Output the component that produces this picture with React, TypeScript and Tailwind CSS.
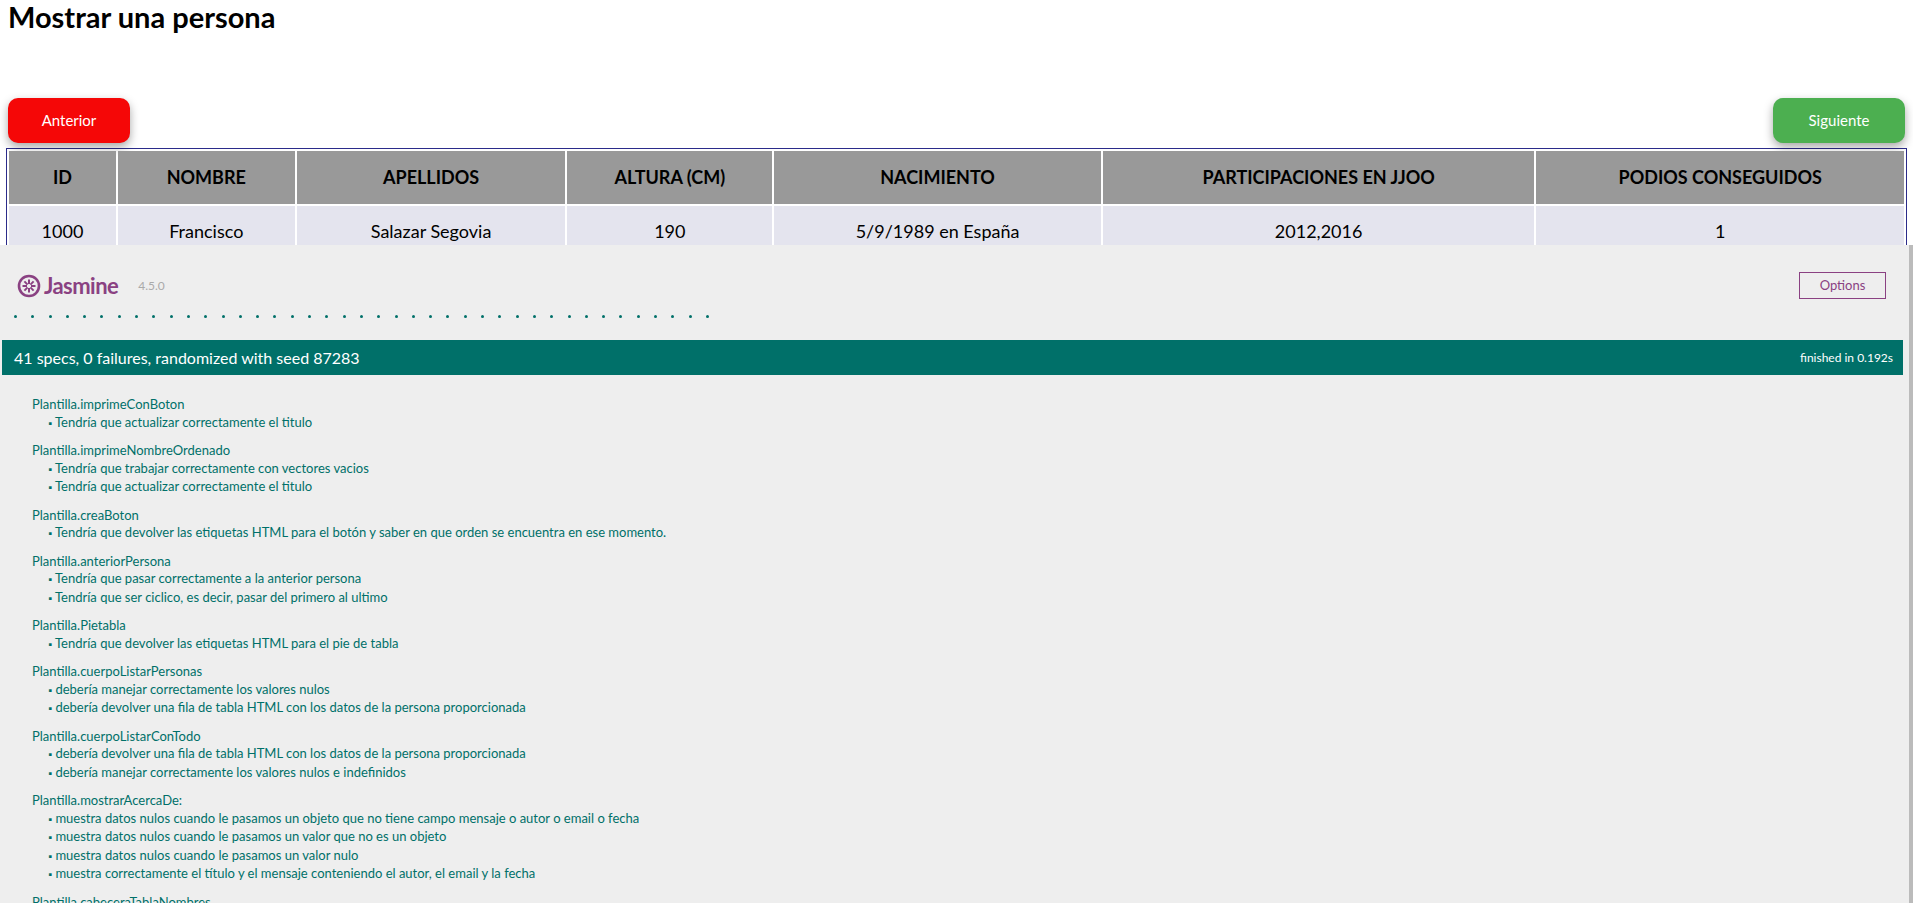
import React from "react";

const suites: [string, string[]][] = [
  ["Plantilla.imprimeConBoton", ["Tendría que actualizar correctamente el titulo"]],
  ["Plantilla.imprimeNombreOrdenado", ["Tendría que trabajar correctamente con vectores vacios", "Tendría que actualizar correctamente el titulo"]],
  ["Plantilla.creaBoton", ["Tendría que devolver las etiquetas HTML para el botón y saber en que orden se encuentra en ese momento."]],
  ["Plantilla.anteriorPersona", ["Tendría que pasar correctamente a la anterior persona", "Tendría que ser ciclico, es decir, pasar del primero al ultimo"]],
  ["Plantilla.Pietabla", ["Tendría que devolver las etiquetas HTML para el pie de tabla"]],
  ["Plantilla.cuerpoListarPersonas", ["debería manejar correctamente los valores nulos", "debería devolver una fila de tabla HTML con los datos de la persona proporcionada"]],
  ["Plantilla.cuerpoListarConTodo", ["debería devolver una fila de tabla HTML con los datos de la persona proporcionada", "debería manejar correctamente los valores nulos e indefinidos"]],
  ["Plantilla.mostrarAcercaDe:", ["muestra datos nulos cuando le pasamos un objeto que no tiene campo mensaje o autor o email o fecha", "muestra datos nulos cuando le pasamos un valor que no es un objeto", "muestra datos nulos cuando le pasamos un valor nulo", "muestra correctamente el título y el mensaje conteniendo el autor, el email y la fecha"]],
  ["Plantilla.cabeceraTablaNombres", ["Tendría que devolver las etiquetas HTML para la cabecera de la tabla de listar personas."]],
];

const cols = [
  ["ID", "1000", 107],
  ["NOMBRE", "Francisco", 177],
  ["APELLIDOS", "Salazar Segovia", 269],
  ["ALTURA (CM)", "190", 205],
  ["NACIMIENTO", "5/9/1989 en España", 327],
  ["PARTICIPACIONES EN JJOO", "2012,2016", 432],
  ["PODIOS CONSEGUIDOS", "1", 368],
] as const;

export default function App() {
  return (
    <div className="h-[903px] w-[1913px] overflow-hidden bg-white" style={{ fontFamily: "Lato, 'Noto Sans', sans-serif" }}>
      <h1 className="pl-2 pt-[2px] text-[29px] font-bold leading-[30px] text-black">Mostrar una persona</h1>
      <div className="mt-[66px] flex justify-between px-[8px]">
        <button className="h-[45px] w-[122px] rounded-[10px] bg-[#f50707] text-[15px] text-white shadow-[0_4px_10px_rgba(0,0,0,0.35)]">Anterior</button>
        <button className="h-[45px] w-[132px] rounded-[10px] bg-[#4caf50] text-[15px] text-white shadow-[0_4px_10px_rgba(0,0,0,0.35)]">Siguiente</button>
      </div>
      <div className="mx-[6px] mt-[5px] h-[97px] overflow-hidden border-x border-t border-[#2b2b8a] p-[2px]">
        <div className="flex gap-[2px]">
          {cols.map(([h, , w]) => (
            <div key={h} className="flex h-[53px] items-center justify-center bg-[#999999] text-[18px] font-bold text-black" style={{ width: w }}>{h}</div>
          ))}
        </div>
        <div className="mt-[2px] flex gap-[2px]">
          {cols.map(([h, v, w]) => (
            <div key={h} className="flex h-[50px] items-center justify-center bg-[#e4e4ee] text-[18px] text-black" style={{ width: w }}>{v}</div>
          ))}
        </div>
      </div>
      <div className="relative h-[658px] bg-[#eeeeee] text-[#007069]">
        <div className="absolute right-0 top-0 h-full w-[4px] bg-[#bbbbbb]" />
        <div className="flex items-center justify-between pl-[17px] pr-[27px] pt-[24px]">
          <div className="flex items-center">
            <svg width="24" height="24" viewBox="0 0 24 24">
              <circle cx="12" cy="12" r="10" fill="none" stroke="#8a4182" strokeWidth="2.6" />
              {[0, 45, 90, 135, 180, 225, 270, 315].map((a) => (
                <line key={a} x1="12" y1="10" x2="12" y2="5.5" stroke="#8a4182" strokeWidth="2" transform={`rotate(${a} 12 12)`} />
              ))}
            </svg>
            <span className="ml-[3px] text-[22px] font-bold tracking-tight text-[#8a4182]">Jasmine</span>
            <span className="ml-[20px] text-[12px] text-[#aaaaaa]">4.5.0</span>
          </div>
          <button className="h-[27px] w-[87px] border border-[#8a4182] text-[13px] text-[#8a4182]">Options</button>
        </div>
        <div className="ml-[14px] mt-[13px] flex gap-[14.3px]">
          {Array.from({ length: 41 }).map((_, i) => (
            <span key={i} className="h-[3px] w-[3px] rounded-full bg-[#007069]" />
          ))}
        </div>
        <div className="ml-[2px] mr-[10px] mt-[22px] flex h-[35px] items-center justify-between bg-[#007069] pl-[12px] pr-[10px] text-white">
          <span className="text-[16px]">41 specs, 0 failures, randomized with seed 87283</span>
          <span className="text-[12px]">finished in 0.192s</span>
        </div>
        <div className="ml-[32px] mt-[21px] text-[13px] leading-[17.5px]">
          {suites.map(([s, specs]) => (
            <div key={s} className="mb-[10px]">
              <div>{s}</div>
              {specs.map((t) => (
                <div key={t} className="pl-[16px]">
                  <span className="text-[10px]">▪</span> {t}
                </div>
              ))}
            </div>
          ))}
        </div>
      </div>
    </div>
  );
}
